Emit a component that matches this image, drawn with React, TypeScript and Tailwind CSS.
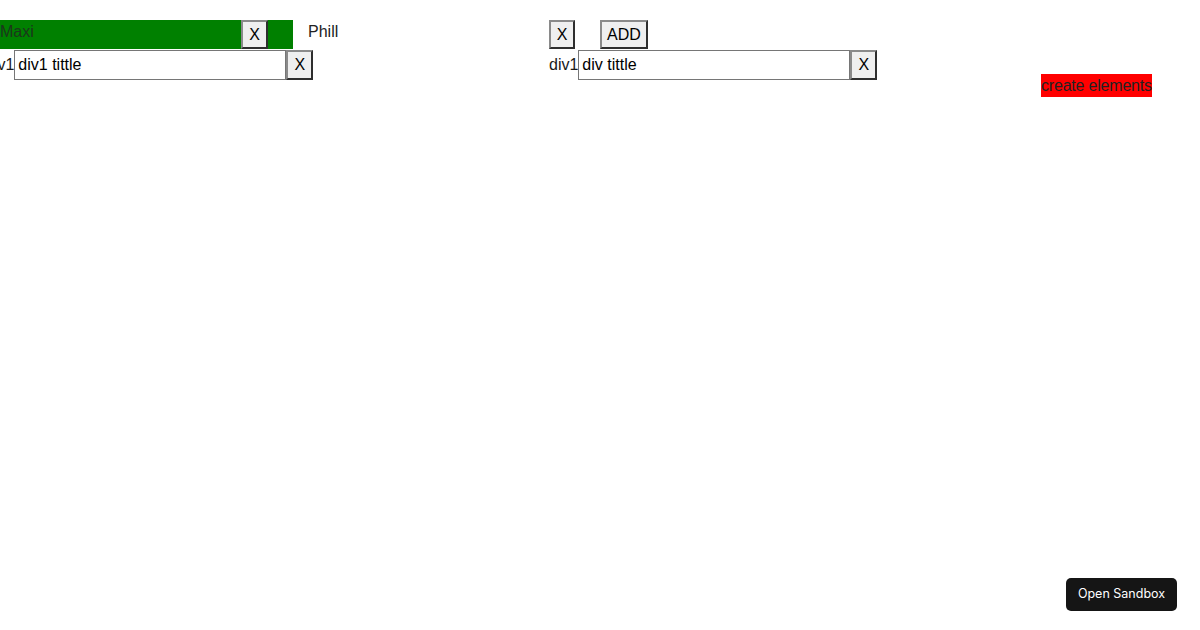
import React from 'react';

const btn =
  'h-full px-[6px] bg-[#efefef] text-[16px] leading-none text-black border-2 border-t-[#8a8a8a] border-l-[#8a8a8a] border-b-[#2e2e2e] border-r-[#2e2e2e] flex items-center justify-center';

const TitleRow: React.FC<{ label: string; value: string }> = ({ label, value }) => (
  <div className="flex items-center h-[30px] mt-[1px]">
    <span className="text-[#1a1a1a] pr-0">{label}</span>
    <input
      readOnly
      value={value}
      className="w-[272px] h-[30px] border border-[#767676] px-[3px] text-[16px] text-black outline-none bg-white"
    />
    <button className={btn + ' w-[27px]'}>X</button>
  </div>
);

export default function App() {
  return (
    <div
      className="relative w-[1200px] h-[630px] bg-white overflow-hidden text-[16px] text-[#222]"
      style={{ fontFamily: '"Liberation Sans", Arial, sans-serif' }}
    >
      <div className="flex pt-[20px]">
        {/* left list */}
        <div className="w-[549px] shrink-0">
          <div className="flex items-center h-[29px]">
            <div className="w-[293px] h-[29px] bg-[#008000] flex items-start">
              <span className="text-[#1c361c] leading-[23px]">Maxi</span>
              <div className="ml-auto mr-[25px] h-[29px]">
                <button className={btn + ' w-[27px]'}>X</button>
              </div>
            </div>
            <span className="ml-[15px] -mt-[6px]">Phill</span>
          </div>
          <div className="-ml-[15px]">
            <TitleRow label="div1" value="div1 tittle" />
          </div>
        </div>

        {/* right editor */}
        <div className="w-[492px] shrink-0">
          <div className="flex items-center h-[29px] gap-[25px]">
            <button className={btn + ' w-[26px]'}>X</button>
            <button className={btn + ' w-[48px]'}>ADD</button>
          </div>
          <TitleRow label="div1" value="div tittle" />
        </div>

        <div className="pt-[54px]">
          <div className="bg-[#ff0000] h-[23px] leading-[23px] px-0 text-[#222] whitespace-nowrap tracking-[-0.2px]">
            create elements
          </div>
        </div>
      </div>

      <button
        className="absolute right-[23px] bottom-[19px] w-[111px] h-[33px] rounded-[5px] bg-[#151515] text-white text-[12.5px] flex items-center justify-center"
        style={{ fontFamily: 'Inter, "Liberation Sans", sans-serif' }}
      >
        Open Sandbox
      </button>
    </div>
  );
}
